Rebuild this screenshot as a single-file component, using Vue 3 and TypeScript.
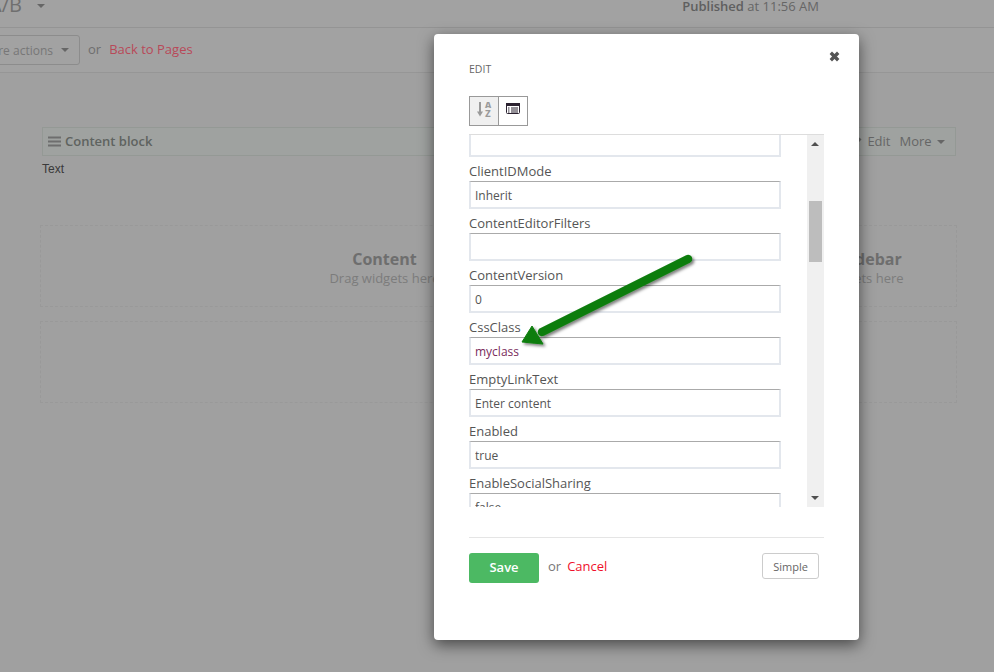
<script setup lang="ts">
const fields: { label: string; value: string; accent?: boolean }[] = [
  { label: 'ClientIDMode', value: 'Inherit' },
  { label: 'ContentEditorFilters', value: '' },
  { label: 'ContentVersion', value: '0' },
  { label: 'CssClass', value: 'myclass', accent: true },
  { label: 'EmptyLinkText', value: 'Enter content' },
  { label: 'Enabled', value: 'true' },
  { label: 'EnableSocialSharing', value: 'false' },
]
</script>

<template>
  <div class="page">
    <header class="top">
      <span class="title">A/B</span>
      <span class="caret title-caret"></span>
      <span class="published"><b>Published</b> at 11:56 AM</span>
    </header>
    <div class="actions">
      <button class="more-actions">More actions <span class="caret"></span></button>
      <span class="or">or</span>
      <a class="back">Back to Pages</a>
    </div>
    <main class="content">
      <div class="block-bar">
        <svg class="grip" width="13" height="11" viewBox="0 0 13 11"><path d="M0 1.500h13M0 5.500h13M0 9.500h13" stroke="#8a8a8a" stroke-width="2" /></svg>
        <span class="block-name">Content block</span>
        <span class="block-tools">
          <svg width="10" height="10" viewBox="0 0 10 10"><path d="M1 9l.6-2.600L6.500 1.500l2 2-4.900 4.900z" fill="#808080" /></svg>
          <span>Edit</span>
          <span class="block-more">More <span class="caret"></span></span>
        </span>
      </div>
      <p class="block-text">Text</p>
      <section class="zone zone-main">
        <div class="zone-part part-content">
          <strong>Content</strong>
          <span>Drag widgets here</span>
        </div>
        <div class="zone-part part-side">
          <strong>Right Sidebar</strong>
          <span>Drag widgets here</span>
        </div>
      </section>
      <section class="zone zone-empty"></section>
    </main>

    <div class="overlay"></div>

    <div class="modal">
      <svg class="close" width="11" height="11" viewBox="0 0 11 11"><path d="M1.800 1.800l7.400 7.400M9.200 1.800l-7.400 7.400" stroke="#555" stroke-width="3.400" /></svg>
      <div class="edit-label">EDIT</div>
      <div class="view-switch">
        <span class="switch-btn active">
          <svg width="15" height="15" viewBox="0 0 15 15">
            <path d="M3 0v11" stroke="#9a9a9a" stroke-width="2" />
            <path d="M0 9.500h6l-3 5z" fill="#9a9a9a" />
            <text x="8" y="6" class="az">A</text>
            <text x="8" y="14.500" class="az">Z</text>
          </svg>
        </span>
        <span class="switch-btn table-btn">
          <svg width="14" height="11" viewBox="0 0 14 11">
            <rect x="0.500" y="0.500" width="13" height="10" rx="1" fill="#fff" stroke="#2b2230" />
            <rect x="0" y="0" width="14" height="3" fill="#2b2230" />
            <path d="M2 5h1.500M2 7h1.500M2 9h1.500M5 5h7M5 7h7M5 9h7" stroke="#2b2230" stroke-width="1" />
          </svg>
        </span>
      </div>
      <div class="scroller">
        <div class="list">
          <input class="field-input" readonly value="" aria-label="Previous property" />
          <label v-for="field in fields" :key="field.label" class="field">
            <span class="field-label">{{ field.label }}</span>
            <input class="field-input" :class="{ accent: field.accent }" readonly :value="field.value" />
          </label>
        </div>
        <div class="scrollbar">
          <span class="arrow arrow-up"></span>
          <span class="thumb"></span>
          <span class="arrow arrow-down"></span>
        </div>
      </div>
      <div class="footer">
        <button class="save">Save</button>
        <span class="footer-or">or</span>
        <a class="cancel">Cancel</a>
        <button class="simple">Simple</button>
      </div>
    </div>

    <svg class="pointer" width="190" height="105" viewBox="0 0 190 105">
      <defs>
        <filter id="arrow-shadow" x="-10%" y="-10%" width="120%" height="130%">
          <feDropShadow dx="2" dy="2" stdDeviation="1.500" flood-color="#000" flood-opacity="0.5" />
        </filter>
      </defs>
      <g filter="url(#arrow-shadow)">
        <path d="M173 10L27 83" stroke="#0b7d0b" stroke-width="8.500" stroke-linecap="round" fill="none" />
        <path d="M7 93L17 77L28 95z" fill="#0b7d0b" stroke="#0b7d0b" stroke-linejoin="round" />
      </g>
    </svg>
  </div>
</template>

<style scoped>
.page {
  position: relative;
  width: 994px;
  height: 672px;
  overflow: hidden;
  background: #c8c8c8;
  color: #555;
  font-family: "Open Sans", sans-serif;
  font-size: 13px;
}
.caret {
  display: inline-block;
  width: 0;
  height: 0;
  border-left: 4px solid transparent;
  border-right: 4px solid transparent;
  border-top: 4px solid #808080;
  vertical-align: middle;
}
.top {
  display: flex;
  align-items: flex-start;
  height: 27px;
  box-sizing: content-box;
  border-bottom: 1px solid #b9b9b9;
  background: #cbcbcb;
}
.title {
  margin: -9px 0 0 -11px;
  font-size: 20px;
  line-height: 27px;
  color: #8b8b8b;
}
.title-caret {
  margin: 4px 0 0 15px;
}
.published {
  margin-left: auto;
  margin-right: 175px;
  margin-top: -3px;
  line-height: 18px;
  color: #808080;
}
.published b {
  font-weight: 600;
  color: #777;
}
.actions {
  display: flex;
  align-items: center;
  height: 44px;
  border-bottom: 1px solid #bcbcbc;
  background: #cbcbcb;
}
.more-actions {
  display: flex;
  flex: none;
  align-items: center;
  justify-content: flex-end;
  width: 100px;
  height: 30px;
  margin: 0 0 0 -20px;
  padding: 0 10px 0 0;
  border: 1px solid #afafaf;
  border-radius: 3px;
  background: #cbcbcb;
  color: #959595;
  font: 12px "Open Sans", sans-serif;
  white-space: nowrap;
}
.more-actions .caret { margin-left: 8px; }
.or {
  margin: -2px 0 0 8px;
  color: #8a8a8a;
}
.back {
  margin: -2px 0 0 8px;
  color: #e65c70;
}
.content { padding: 54px 37px 0 40px; }
.block-bar {
  display: flex;
  align-items: center;
  height: 29px;
  margin: 0 1px 0 2px;
  box-sizing: border-box;
  padding: 0 10px 2px 5px;
  border: 1px solid #b9c0bb;
  background: #c7cbc8;
}
.grip {
  margin: 2px 4px 0 0;
}
.block-name {
  font-weight: 600;
  color: #777c78;
}
.block-tools {
  display: flex;
  align-items: center;
  gap: 4px;
  margin-left: auto;
  color: #808080;
}
.block-more { margin-left: 5px; }
.block-more .caret { margin-left: 2px; }
.block-text {
  margin: 5px 0 0 2px;
  font-family: "Liberation Sans", sans-serif;
  font-size: 12px;
  line-height: 17px;
  color: #494949;
}
.zone {
  display: flex;
  box-sizing: border-box;
  height: 82px;
  border: 1px dashed #c0c0c0;
}
.zone-main { margin-top: 47px; }
.zone-empty { margin-top: 14px; }
.zone-part {
  display: flex;
  flex-direction: column;
  align-items: center;
  padding-top: 23px;
}
.part-content { width: 687px; }
.part-side {
  width: 228px;
  padding-left: 13px;
  box-sizing: border-box;
}
.zone-part strong {
  font-size: 16px;
  line-height: 20px;
  font-weight: 700;
  color: #8a8a8a;
}
.zone-part span {
  margin-top: 1px;
  font-size: 13px;
  line-height: 17px;
  color: #9c9c9c;
  white-space: nowrap;
}
.overlay {
  position: absolute;
  inset: 0;
  background: rgba(0, 0, 0, 0.2);
}
.modal {
  position: absolute;
  left: 434px;
  top: 34px;
  width: 425px;
  height: 606px;
  box-sizing: border-box;
  padding: 28px 35px 0;
  border-radius: 4px;
  background: #fff;
  box-shadow: 0 5px 15px rgba(0, 0, 0, 0.55);
}
.close {
  position: absolute;
  top: 17px;
  right: 19px;
}
.edit-label {
  font-size: 10.500px;
  line-height: 14px;
  color: #666;
}
.view-switch {
  display: flex;
  width: 59px;
  height: 30px;
  margin-top: 20px;
  box-sizing: border-box;
  border: 1px solid #999;
}
.switch-btn {
  display: flex;
  align-items: flex-start;
  justify-content: center;
  flex: 1;
  padding-top: 5px;
}
.switch-btn.active {
  background: #f0f0f0;
  border-right: 1px solid #999;
}
.table-btn { padding-top: 6px; }
.az {
  font-family: "DejaVu Sans", sans-serif;
  font-size: 8px;
  font-weight: 700;
  fill: #9a9a9a;
}
.scroller {
  display: flex;
  justify-content: space-between;
  width: 355px;
  height: 373px;
  margin-top: 8px;
  box-sizing: border-box;
  border-top: 1px solid #ddd;
  overflow: hidden;
}
.list {
  display: flex;
  flex-direction: column;
  flex: none;
  width: 312px;
  margin-top: -6px;
}
.field {
  display: flex;
  flex-direction: column;
}
.field-label {
  height: 24px;
  line-height: 28px;
  color: #555;
}
.field-input {
  flex: none;
  width: 312px;
  height: 28px;
  box-sizing: border-box;
  padding: 2px 4px 0;
  border-style: solid;
  border-color: #aaa #e3e7ed #e3e7ed;
  border-width: 1px 2px 2px;
  outline: none;
  background: #fff;
  color: #555;
  font: 12px "Open Sans", sans-serif;
}
.field-input.accent { color: #7a2c5c; }
.scrollbar {
  position: relative;
  flex: none;
  width: 17px;
  background: #f0f0f0;
}
.arrow {
  position: absolute;
  left: 4px;
  width: 0;
  height: 0;
  border-left: 4px solid transparent;
  border-right: 4px solid transparent;
}
.arrow-up {
  top: 7px;
  border-bottom: 4px solid #505050;
}
.arrow-down {
  bottom: 7px;
  border-top: 4px solid #505050;
}
.thumb {
  position: absolute;
  left: 2px;
  top: 66px;
  width: 13px;
  height: 61px;
  background: #bdbdbd;
}
.footer {
  display: flex;
  align-items: flex-start;
  width: 355px;
  margin-top: 30px;
  box-sizing: border-box;
  padding-top: 15px;
  border-top: 1px solid #e5e5e5;
}
.save {
  width: 70px;
  height: 30px;
  padding: 0 0 2px;
  border: 0;
  border-radius: 3px;
  background: #4cb963;
  color: #fff;
  font: 600 13px "Open Sans", sans-serif;
}
.footer-or {
  margin-left: 9px;
  line-height: 26px;
  color: #777;
}
.cancel {
  margin-left: 6px;
  line-height: 26px;
  color: #f0102c;
}
.simple {
  width: 57px;
  height: 26px;
  margin-left: auto;
  margin-right: 5px;
  border: 1px solid #ccc;
  border-radius: 3px;
  background: #fff;
  color: #666;
  font: 11px "Open Sans", sans-serif;
}
.pointer {
  position: absolute;
  left: 515px;
  top: 249px;
}
</style>
